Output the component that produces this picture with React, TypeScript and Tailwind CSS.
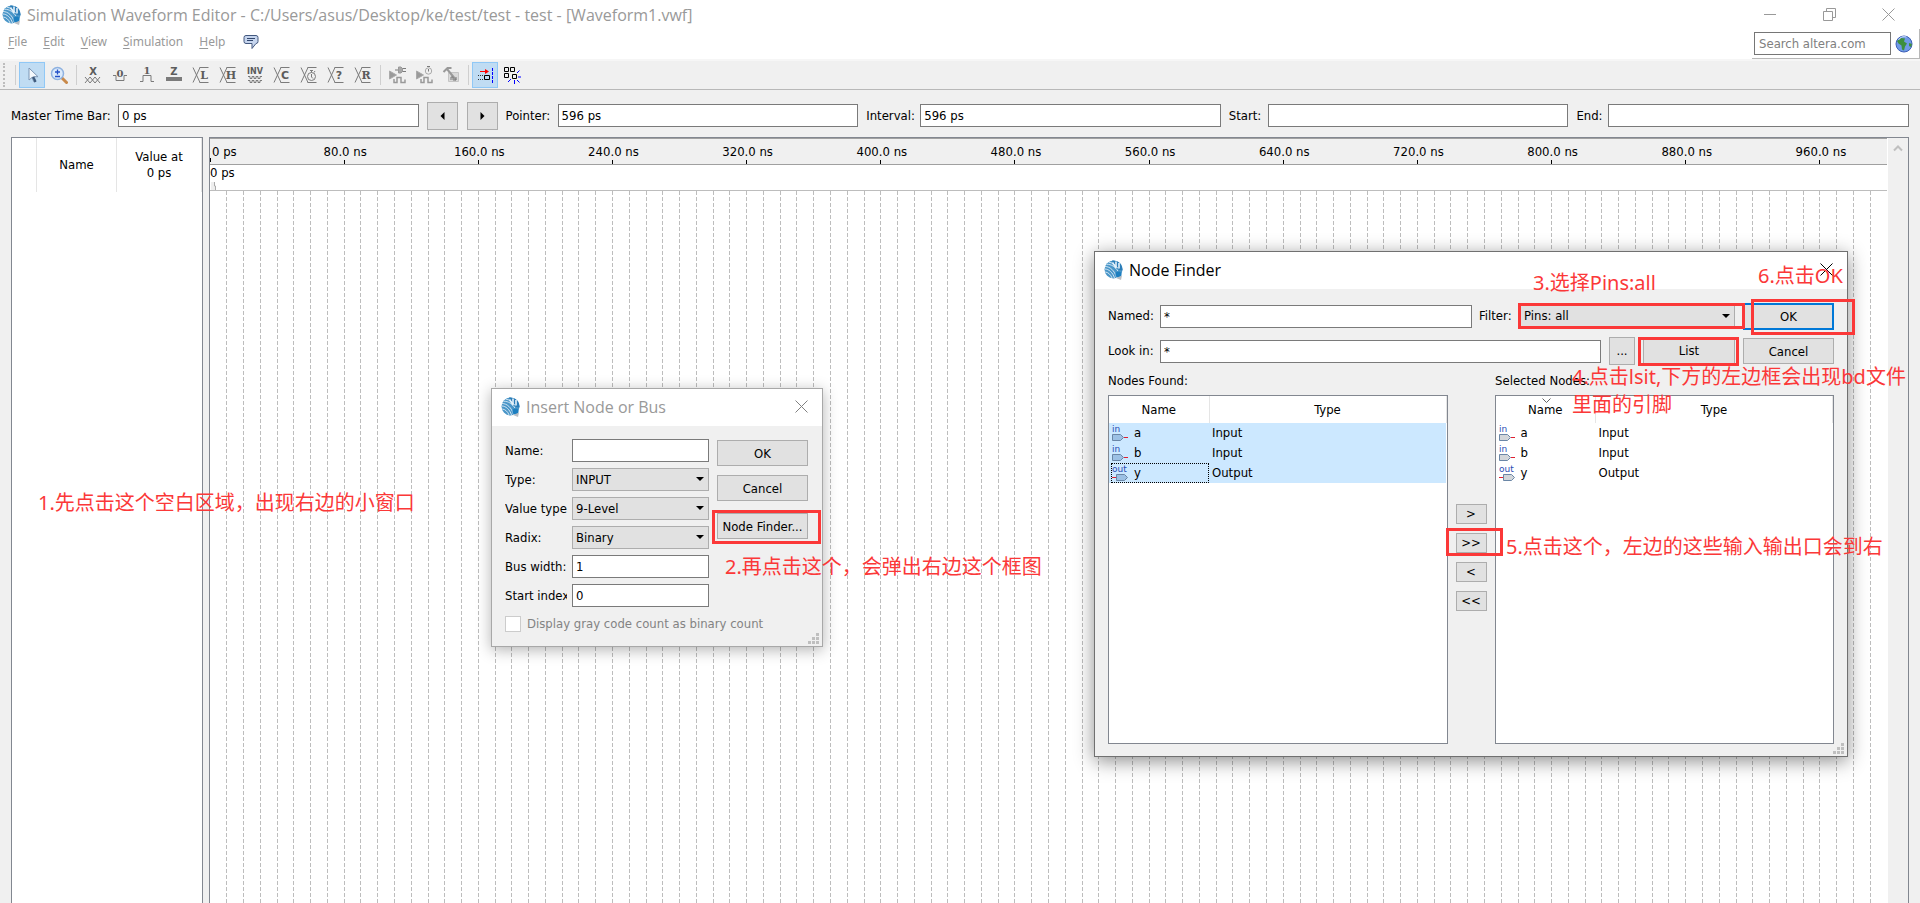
import { useState } from "react";
import type { ReactNode } from "react";

const RED = "#fb3838";

function Logo() {
	return (
		<svg width="20" height="20" viewBox="0 0 20 20" aria-hidden="true" className="shrink-0">
			<circle cx="9.5" cy="9.5" r="9" fill="#4a96c8" />
			<path d="M8 .600a9 9 0 0 1 10.400 10l-3-.6-6-4z" fill="#2b7db8" />
			<path d="M8.500 2.500l3.500 5.500M12 1.500v6.500M15 3v5.500" stroke="#e6f2fa" strokeWidth="1.600" fill="none" />
			<path d="M1 6.500c5 0 9.500 4 11.500 11M.8 9c4 0 8 3.500 9.700 9M1.200 12c3 .3 5.500 2.500 7 6.200M2.500 4.200c5 0 9 2.800 11.500 7M5 2.200c3.500.5 6.500 2.500 9 6.300" stroke="#dcecf7" strokeWidth=".9" fill="none" />
			<circle cx="14.500" cy="14.500" r="3" fill="#1c7fc0" />
			<path d="M12 18l6-2.500-1 4.500z" fill="#b9bec4" />
		</svg>
	);
}

function CloseIcon({ color }: { color: string }) {
	return (
		<svg width="13" height="13" viewBox="0 0 13 13" aria-hidden="true">
			<path d="M.5.5l12 12M12.500.5l-12 12" stroke={color} fill="none" />
		</svg>
	);
}

function Grip() {
	return (
		<svg width="11" height="11" viewBox="0 0 11 11" aria-hidden="true" className="absolute right-[3px] bottom-0.5">
			<path d="M8 0h3v3h-3zM4 4h3v3h-3zM8 4h3v3h-3zM0 8h3v3h-3zM4 8h3v3h-3zM8 8h3v3h-3z" fill="#bfbfbf" />
		</svg>
	);
}

// 18x18 frame shared by the grey waveform icons
function Glyph({ children }: { children: ReactNode }) {
	return (
		<svg width="18" height="18" viewBox="0 0 18 18" fill="none" stroke="#7b7b7b" aria-hidden="true">
			{children}
		</svg>
	);
}

function Letter({ x, y, size = 10, mono, children }: { x: number; y: number; size?: number; mono?: boolean; children: string }) {
	return (
		<text x={x} y={y} fontSize={size} fontWeight="bold" textAnchor="middle" fill="#5c5c5c" stroke="none" fontFamily={mono ? "DejaVu Sans, sans-serif" : "DejaVu Serif, serif"}>
			{children}
		</text>
	);
}

function BusGlyph({ letter, mono }: { letter?: string; mono?: boolean }) {
	return (
		<Glyph>
			<path d="M1 1.500l7 15M8 1.500l-7 15M7.500 1.500h9M7.500 16.500h9" />
			{letter ? (
				<Letter x={12} y={13} size={11} mono={mono}>{letter}</Letter>
			) : (
				<>
					<circle cx="11.500" cy="10.500" r="4" />
					<path d="M10 4.500h3M11.500 4.500v2M11.500 8v3l1.500 1.500M15 5l-1 1.500" />
				</>
			)}
		</Glyph>
	);
}

const waveTools = [
	{ label: "Forcing Unknown", icon: <Glyph><Letter x={9} y={9} mono>X</Letter><path d="M1 11l5 6M6 11l-5 6M6 11l5 6M11 11l-5 6M11 11l5 6M16 11l-5 6" /></Glyph> },
	{ label: "Forcing Low", icon: <Glyph><Letter x={9} y={11}>0</Letter><path d="M2 9.500h3v5h8v-5h3" /></Glyph> },
	{ label: "Forcing High", icon: <Glyph><Letter x={9} y={8}>1</Letter><path d="M2 15.500h3v-6h8v6h3" /></Glyph> },
	{ label: "High Impedance", icon: <Glyph><Letter x={9} y={9} mono>Z</Letter><path d="M1 13h16" strokeWidth="4" /></Glyph> },
	{ label: "Weak Low", icon: <BusGlyph letter="L" /> },
	{ label: "Weak High", icon: <BusGlyph letter="H" /> },
	{ label: "Invert", icon: <Glyph><Letter x={9} y={8} size={8} mono>INV</Letter><path d="M2 10.500h2v2h2v-2h2v2h2v-2h2v2h2v-2h2M2 14.500h2v2h2v-2h2v2h2v-2h2v2h2v-2h2" /></Glyph> },
	{ label: "Count Value", icon: <BusGlyph letter="C" mono /> },
	{ label: "Overwrite Clock", icon: <BusGlyph /> },
	{ label: "Arbitrary Value", icon: <BusGlyph letter="?" mono /> },
	{ label: "Random Values", icon: <BusGlyph letter="R" /> },
];

const PULSE = "M6 13v3.500h3v-5h4v5h4v-3";

const runTools = [
	{ label: "Run Functional Simulation", icon: <Glyph><path d="M1.500 5l7 4-7 4z" fill="#9a9a9a" stroke="#aaa" /><path d={PULSE} stroke="#999" strokeWidth="1.500" /><path d="M7 4h4M14 2.500h4M14 5.500h4" /><path d="M10.500 1h2.500l1.500 1.500v3l-1.500 1.500h-2.500z" fill="#a8a8a8" stroke="#999" /></Glyph> },
	{ label: "Run Timing Simulation", icon: <Glyph><path d="M1.500 5l7 4-7 4z" fill="#9a9a9a" stroke="#aaa" /><path d={PULSE} stroke="#999" strokeWidth="1.500" /><circle cx="13.500" cy="5" r="3.200" stroke="#aaa" /><path d="M13.500 3v2.500M12 .5h3" /></Glyph> },
	{ label: "Generate Testbench", icon: <Glyph><path d="M6.500 6.500h10v9h-10z" fill="#dadada" stroke="#c4c4c4" /><path d="M1.500 6l4-4h4M5 3l9 11" stroke="#999" strokeWidth="2" /><path d="M9 14v-3h2v3h3v-3" /></Glyph> },
];

function ToolButton({ label, active, children }: { label: string; active?: boolean; children: ReactNode }) {
	return (
		<button
			type="button"
			aria-label={label}
			className={active ? "flex h-[26px] w-[26px] items-center justify-center border border-[#90c8f6] bg-[#c0dcf3]" : "flex h-[26px] w-[26px] items-center justify-center"}
		>
			{children}
		</button>
	);
}

function ToolSeparator() {
	return (
		<div className="flex h-5 w-1.5 justify-center">
			<div className="w-px bg-[#cfcfcf]" />
		</div>
	);
}

function Toolbar() {
	return (
		<div className="flex h-[31px] items-center gap-px border-t-2 border-b border-t-[#f6f6f6] border-b-[#b8b8b8] bg-[#f0f0f0] pl-[3px]">
			<div className="h-6 w-[3px] border-l-2 border-dotted border-[#bdbdbd]" />
			<div className="w-1" />
			<ToolSeparator />
			<ToolButton label="Selection Tool" active>
				<svg width="18" height="18" viewBox="0 0 18 18" aria-hidden="true">
					<path d="M6 2v12l3-2.500 2 4.500 2-1-2-4.300h4z" fill="#f4f8fc" stroke="#7d96b4" />
					<path d="M9 11l2.500 5.500 2-1-2.500-5" fill="#3d5a7c" />
				</svg>
			</ToolButton>
			<ToolButton label="Zoom Tool">
				<svg width="18" height="18" viewBox="0 0 18 18" fill="none" aria-hidden="true">
					<path d="M11.500 11.500l5 5" stroke="#c98a4b" strokeWidth="3" strokeLinecap="round" />
					<circle cx="7.500" cy="7.500" r="6" fill="#dbeafb" stroke="#8fb2e0" strokeWidth="1.500" />
					<path d="M7.500 3.500v5M5 6h5M5 10.500h5" stroke="#2450c8" strokeWidth="1.300" />
				</svg>
			</ToolButton>
			<ToolSeparator />
			{waveTools.map((t) => (
				<ToolButton key={t.label} label={t.label}>{t.icon}</ToolButton>
			))}
			<ToolSeparator />
			{runTools.map((t) => (
				<ToolButton key={t.label} label={t.label}>{t.icon}</ToolButton>
			))}
			<ToolSeparator />
			<ToolButton label="Snap to Transition" active>
				<svg width="18" height="18" viewBox="0 0 18 18" fill="none" aria-hidden="true">
					<path d="M4 5.500h7" stroke="#f00" />
					<path d="M9 3l4 2.500-4 2.500z" fill="#f00" />
					<path d="M2 9.500h6M2 13.500h6" stroke="#333" strokeDasharray="1 1" />
					<path d="M8.500 9.500h5v4h-5z" stroke="#000" />
					<path d="M16.500 2v15" stroke="#00f" strokeDasharray="3 1" />
				</svg>
			</ToolButton>
			<ToolButton label="Snap to Grid">
				<svg width="18" height="18" viewBox="0 0 18 18" fill="none" aria-hidden="true">
					<path d="M1.500 1.500h4v4h-4zM7.500 1.500h4v4h-4zM1.500 7.500h4v4h-4zM9.500 8.500h4v4h-4z" stroke="#000" />
					<path d="M14 7l2.500-2.500M15 11h3M14 14l2.500 2.500M11.500 14v4M8 13l-3 3" stroke="#00f" />
				</svg>
			</ToolButton>
		</div>
	);
}

const menus = ["File", "Edit", "View", "Simulation", "Help"];

function TitleAndMenu() {
	return (
		<header className="bg-white text-[#999]">
			<div className="flex h-[29px] items-center gap-[5px] pr-[25px] pl-0.5">
				<Logo />
				<h1 className="flex-1 text-base leading-5">Simulation Waveform Editor - C:/Users/asus/Desktop/ke/test/test - test - [Waveform1.vwf]</h1>
				<div className="flex items-center gap-[46px]">
					<button type="button" aria-label="Minimize">
						<svg width="13" height="13" viewBox="0 0 13 13"><path d="M0 6.500h12" stroke="#999" /></svg>
					</button>
					<button type="button" aria-label="Restore">
						<svg width="13" height="13" viewBox="0 0 13 13"><path d="M.5 3.500h9v9h-9zM3.500 3v-2.500h9v9h-2.500" stroke="#999" fill="none" /></svg>
					</button>
					<button type="button" aria-label="Close"><CloseIcon color="#999" /></button>
				</div>
			</div>
			<div className="flex h-[30px] items-start justify-between">
				<nav className="flex items-center gap-4 pt-[3px] pl-2 text-xs leading-5">
					{menus.map((m) => (
						<button key={m} type="button"><span className="underline underline-offset-2">{m[0]}</span>{m.slice(1)}</button>
					))}
					<svg width="16" height="16" viewBox="0 0 16 16" aria-hidden="true" className="ml-0.5">
						<path d="M3 1.500h10a2 2 0 0 1 2 2v4a2 2 0 0 1-2 2l-4 5v-5h-6a2 2 0 0 1-2-2v-4a2 2 0 0 1 2-2z" fill="#c6d5ee" stroke="#44597f" />
						<path d="M4 4.500h8M4 6.500h6" stroke="#33486e" />
					</svg>
				</nav>
				<div className="flex h-[30px] items-center gap-1 border-r border-b border-[#b8b8b8] pr-1.5 pl-0.5">
					<input aria-label="Search altera.com" placeholder="Search altera.com" className="h-[23px] w-[137px] border border-[#767676] px-1 placeholder:text-[#808080]" />
					<svg width="18" height="18" viewBox="0 0 18 18" aria-hidden="true">
						<circle cx="9" cy="9" r="8" fill="#6f9ae6" stroke="#3d5fb8" />
						<path d="M2 6l4-3 4 .5-1 3 3 2-2 3-1 4-2-1-.5-4-3-2zM14 8l3 1-1 3-2-1z" fill="#3d8f3d" />
						<path d="M3.500 5a7 7 0 0 1 8-3" stroke="#cfe0fa" fill="none" />
					</svg>
				</div>
			</div>
		</header>
	);
}

const lineInput = "h-[23px] border border-[#7a7a7a] bg-white px-[3px]";
const pushButton = "flex items-center justify-center border border-[#adadad] bg-[#e1e1e1]";

function TimeField({ id, label, width, value }: { id: string; label: string; width: string; value: string }) {
	return (
		<>
			<label htmlFor={id} className={`${width} shrink-0 whitespace-nowrap`}>{label}</label>
			<input id={id} defaultValue={value} className={`${lineInput} min-w-0 flex-1`} />
		</>
	);
}

function TimeBar() {
	return (
		<div className="flex h-[47px] items-center gap-2 px-[11px] pt-1">
			<TimeField id="master" label="Master Time Bar:" width="w-[99px]" value="0 ps" />
			<div className="flex gap-[9px]">
				<button type="button" aria-label="Previous transition" className={`${pushButton} h-7 w-[31px]`}>
					<svg width="5" height="8" viewBox="0 0 5 8"><path d="M4.500 0v8l-4-4z" /></svg>
				</button>
				<button type="button" aria-label="Next transition" className={`${pushButton} h-7 w-[31px]`}>
					<svg width="5" height="8" viewBox="0 0 5 8"><path d="M.5 0v8l4-4z" /></svg>
				</button>
			</div>
			<TimeField id="pointer" label="Pointer:" width="w-[44px]" value="596 ps" />
			<TimeField id="interval" label="Interval:" width="w-[46px]" value="596 ps" />
			<TimeField id="start" label="Start:" width="w-[31px]" value="" />
			<TimeField id="end" label="End:" width="w-[24px]" value="" />
		</div>
	);
}

const ticks = Array.from({ length: 12 }, (_, i) => (i + 1) * 80);
const gridLines = Array.from({ length: 99 }, (_, i) => i + 1);

function Waveform() {
	return (
		<section className="flex min-w-0 flex-1 border border-b-0 border-[#828790] bg-white">
			<div className="flex min-w-0 flex-1 flex-col">
				<div className="relative h-[27px] border-t border-b border-[#a0a0a0] bg-[#f0f0f0] leading-4">
					<span className="absolute top-[5px] left-0.5">0 ps</span>
					<span className="absolute bottom-0.5 left-0 h-1 w-px bg-black" />
					{ticks.map((t) => (
						<div key={t} className="absolute inset-y-0 flex w-20 -translate-x-1/2 flex-col items-center justify-between pt-[5px] pb-0.5" style={{ left: `${t / 10}%` }}>
							<span className="pl-0.5">{t}.0 ns</span>
							<span className="h-1 w-px shrink-0 bg-black" />
						</div>
					))}
				</div>
				<div className="flex h-[26px] flex-col justify-between border-b border-[#bdbdbd] leading-4">
					<span>0 ps</span>
					<svg width="6" height="8" viewBox="0 0 6 8" aria-hidden="true" className="ml-px"><path d="M0 0h3l2 8h-5z" fill="#eee" /><path d="M3.500 0v4h1v4" stroke="#aaa" fill="none" /></svg>
				</div>
				<svg width="100%" height="100%" className="min-h-0 flex-1" shapeRendering="crispEdges" aria-hidden="true">
					{gridLines.map((n) => (
						<line key={n} x1={`${n}%`} x2={`${n}%`} y1="0" y2="100%" stroke="#bdbdbd" strokeDasharray="4 2" />
					))}
				</svg>
			</div>
			<div className="flex w-[21px] justify-center border-l border-white bg-[#f0f0f0] pt-1.5">
				<svg width="10" height="8" viewBox="0 0 10 8" aria-hidden="true"><path d="M1 6.500l4-4 4 4" stroke="#bfbfbf" strokeWidth="2" fill="none" /></svg>
			</div>
		</section>
	);
}

function SignalList() {
	return (
		<section className="w-[192px] shrink-0 border border-b-0 border-[#828790] bg-white">
			<div className="flex h-[54px] text-center leading-4">
				<div className="w-[25px] border-r border-[#e5e5e5]" />
				<div className="flex w-20 items-center justify-center border-r border-[#e5e5e5]">Name</div>
				<div className="flex flex-1 items-center justify-center border-r border-[#e5e5e5]">Value at<br />0 ps</div>
			</div>
		</section>
	);
}

function Dropdown({ id, options, className }: { id: string; options: string[]; className: string }) {
	return (
		<div className={`relative ${className}`}>
			<select id={id} className="h-[23px] w-full appearance-none border border-[#adadad] bg-[#e1e1e1] px-[3px]">
				{options.map((o) => (
					<option key={o}>{o}</option>
				))}
			</select>
			<svg width="8" height="4" viewBox="0 0 8 4" aria-hidden="true" className="pointer-events-none absolute top-[9px] right-[5px]"><path d="M0 0h8l-4 4z" /></svg>
		</div>
	);
}

const insertFields = [
	{ id: "node-name", label: "Name:", value: "" },
	{ id: "node-type", label: "Type:", options: ["INPUT", "OUTPUT", "BIDIR"] },
	{ id: "value-type", label: "Value type", options: ["9-Level"] },
	{ id: "radix", label: "Radix:", options: ["Binary", "Hexadecimal"] },
	{ id: "bus-width", label: "Bus width:", value: "1" },
	{ id: "start-index", label: "Start index", value: "0" },
];

function InsertNodeDialog() {
	return (
		<div role="dialog" aria-label="Insert Node or Bus" className="absolute top-[388px] left-[491px] w-[332px] border border-[#a8a8a8] bg-[#f0f0f0] shadow-[0_3px_14px_rgba(0,0,0,0.3)]">
			<div className="flex h-[37px] items-center gap-[5px] bg-white pr-3.5 pb-0.5 pl-[9px]">
				<Logo />
				<h2 className="flex-1 text-base leading-5 text-[#999]">Insert Node or Bus</h2>
				<button type="button" aria-label="Close"><CloseIcon color="#808080" /></button>
			</div>
			<div className="flex justify-between pt-[13px] pr-3.5 pl-[13px]">
				<div className="flex flex-col gap-1.5">
					{insertFields.map((f) => (
						<div key={f.id} className="flex items-center gap-[5px]">
							<label htmlFor={f.id} className="w-[62px] overflow-hidden whitespace-nowrap">{f.label}</label>
							{f.options ? <Dropdown id={f.id} options={f.options} className="w-[137px]" /> : <input id={f.id} defaultValue={f.value} className={`${lineInput} w-[137px]`} />}
						</div>
					))}
				</div>
				<div className="flex flex-col gap-[9px] pt-px">
					<button type="button" className={`${pushButton} h-[26px] w-[91px] pt-px`}>OK</button>
					<button type="button" className={`${pushButton} h-[26px] w-[91px] pt-px`}>Cancel</button>
					<button type="button" className={`${pushButton} mt-[3px] h-[26px] w-[91px] pt-px`}>Node Finder...</button>
				</div>
			</div>
			<label className="flex items-center gap-1.5 pt-[9px] pb-3.5 pl-[13px] text-[#838383]">
				<input type="checkbox" disabled className="h-4 w-4 appearance-none border border-[#ccc] bg-white" />
				Display gray code count as binary count
			</label>
			<Grip />
		</div>
	);
}

const nodes = [
	{ name: "a", type: "Input" },
	{ name: "b", type: "Input" },
	{ name: "y", type: "Output" },
];

function PinIcon({ out, tinted }: { out: boolean; tinted?: boolean }) {
	const fill = tinted ? "#9cc0e4" : "#d2d6da";
	return (
		<svg width="17" height="18" viewBox="0 0 17 18" aria-hidden="true">
			<text x="0" y="8" fontSize="9" fill="#2b4cb4" fontFamily="DejaVu Sans, sans-serif">{out ? "out" : "in"}</text>
			<path d={out ? "M0 13.500h4" : "M12 13.500h4"} stroke="#e02030" />
			<path d={out ? "M4.500 10.500h8l3 3-3 3h-8z" : "M.5 10.500h8l3 3-3 3h-8z"} fill={fill} stroke="#6a86a6" />
		</svg>
	);
}

function NodeTable({ label, selected, sorted }: { label: string; selected?: boolean; sorted?: boolean }) {
	return (
		<div className="h-[349px] min-w-0 flex-1 border border-[#828790] bg-white">
			<table aria-label={label} className="w-full table-fixed border-collapse leading-4">
				<thead>
					<tr className="h-[27px]">
						<th className="relative w-[100px] border-r border-[#e5e5e5] p-0 text-center font-normal">
							{sorted && (
								<svg width="9" height="5" viewBox="0 0 9 5" aria-hidden="true" className="absolute top-0.5 left-[46px]"><path d="M.5.5l4 4 4-4" stroke="#666" fill="none" /></svg>
							)}
							Name
						</th>
						<th className="border-r border-[#e5e5e5] p-0 text-center font-normal">Type</th>
					</tr>
				</thead>
				<tbody>
					{nodes.map((n) => (
						<tr key={n.name} className={selected ? "h-5 bg-[#cce8ff]" : "h-5"}>
							<td className="p-0">
								<div className={selected && n.name === "y" ? "ml-0.5 flex h-5 items-center gap-[5px] border border-dotted border-black" : "flex h-5 items-center gap-[5px] pl-[3px]"}>
									<PinIcon out={n.type === "Output"} tinted={selected} />
									{n.name}
								</div>
							</td>
							<td className="p-0 pl-[3px]">{n.type}</td>
						</tr>
					))}
				</tbody>
			</table>
		</div>
	);
}

const moves = [
	{ text: ">", label: "Add" },
	{ text: ">>", label: "Add all" },
	{ text: "<", label: "Remove" },
	{ text: "<<", label: "Remove all" },
];

function NodeFinderDialog() {
	const [named, setNamed] = useState("*");
	const [lookIn, setLookIn] = useState("*");
	return (
		<div role="dialog" aria-label="Node Finder" className="absolute top-[251px] left-[1094px] w-[754px] border border-[#707070] bg-[#f0f0f0] shadow-[0_4px_18px_rgba(0,0,0,0.45)]">
			<div className="flex h-[37px] items-center gap-[5px] bg-white pr-3.5 pb-0.5 pl-[9px]">
				<Logo />
				<h2 className="flex-1 text-base leading-5">Node Finder</h2>
				<button type="button" aria-label="Close"><CloseIcon color="#000" /></button>
			</div>
			<div className="px-[13px] pt-[13px] pb-3">
				<div className="flex h-7 items-center">
					<label htmlFor="named" className="w-[52px]">Named:</label>
					<input id="named" value={named} onChange={(e) => setNamed(e.target.value)} className={`${lineInput} min-w-0 flex-1`} />
					<label htmlFor="filter" className="w-[48px] pl-[7px]">Filter:</label>
					<Dropdown id="filter" options={["Pins: all", "Pins: input", "Pins: output"]} className="w-[215px]" />
					<button type="button" className="ml-2 flex h-[27px] w-[91px] items-center justify-center border-2 border-[#0078d7] bg-[#e1e1e1] pt-px">OK</button>
				</div>
				<div className="mt-[7px] flex h-7 items-center">
					<label htmlFor="look-in" className="w-[52px]">Look in:</label>
					<input id="look-in" value={lookIn} onChange={(e) => setLookIn(e.target.value)} className={`${lineInput} min-w-0 flex-1`} />
					<button type="button" className={`${pushButton} ml-2 h-7 w-[26px]`}>...</button>
					<button type="button" className={`${pushButton} ml-2 h-[26px] w-[92px]`}>List</button>
					<button type="button" className={`${pushButton} ml-2 h-[26px] w-[91px] pt-px`}>Cancel</button>
				</div>
				<div className="mt-1.5 flex h-5 items-center">
					<div className="flex-1">Nodes Found:</div>
					<div className="w-[339px]">Selected Nodes:</div>
				</div>
				<div className="mt-1 flex items-start gap-2">
					<NodeTable label="Nodes Found" selected />
					<div className="flex flex-col gap-[9px] pt-[109px]">
						{moves.map((m) => (
							<button key={m.label} type="button" aria-label={m.label} className={`${pushButton} h-5 w-[31px]`}>{m.text}</button>
						))}
					</div>
					<NodeTable label="Selected Nodes" sorted />
				</div>
			</div>
			<Grip />
		</div>
	);
}

// numbered red notes and frames laid over the windows
function Annotations() {
	return (
		<div className="pointer-events-none text-xl leading-7 whitespace-nowrap" style={{ color: RED }}>
			<p className="absolute top-[489px] left-[38px]">1.先点击这个空白区域，出现右边的小窗口</p>
			<p className="absolute top-[553px] left-[725px]">2.再点击这个，会弹出右边这个框图</p>
			<p className="absolute top-[269px] left-[1533px]">3.选择Pins:all</p>
			<p className="absolute top-[363px] left-[1572px]">4.点击lsit,下方的左边框会出现bd文件<br />里面的引脚</p>
			<p className="absolute top-[533px] left-[1506px]">5.点击这个，左边的这些输入输出口会到右</p>
			<p className="absolute top-[262px] left-[1758px]">6.点击OK</p>
			<div className="absolute top-[510px] left-[712px] h-[34px] w-[109px] border-[3px] border-[#fb3838]" />
			<div className="absolute top-[303px] left-[1518px] h-[26px] w-[227px] border-[3px] border-[#fb3838]" />
			<div className="absolute top-[299px] left-[1751px] h-9 w-[104px] border-[3px] border-[#fb3838]" />
			<div className="absolute top-[337px] left-[1638px] h-[29px] w-[101px] border-[3px] border-[#fb3838]" />
			<div className="absolute top-[528px] left-[1446px] h-7 w-[57px] border-[3px] border-[#fb3838]" />
		</div>
	);
}

export default function App() {
	return (
		<main className="relative flex min-h-screen flex-col overflow-hidden bg-[#f0f0f0] font-['DejaVu_Sans_Condensed','Noto_Sans','Noto_Sans_CJK_SC',sans-serif] text-[13px] leading-4 text-black [&_h1]:font-['Open_Sans',sans-serif] [&_h2]:font-['Open_Sans',sans-serif] [&_nav]:font-['Noto_Sans',sans-serif] [&_p]:font-['Noto_Sans','Noto_Sans_CJK_SC',sans-serif]">
			<TitleAndMenu />
			<Toolbar />
			<TimeBar />
			<div className="flex flex-1 gap-1.5 px-[11px]">
				<SignalList />
				<Waveform />
			</div>
			<InsertNodeDialog />
			<NodeFinderDialog />
			<Annotations />
		</main>
	);
}
